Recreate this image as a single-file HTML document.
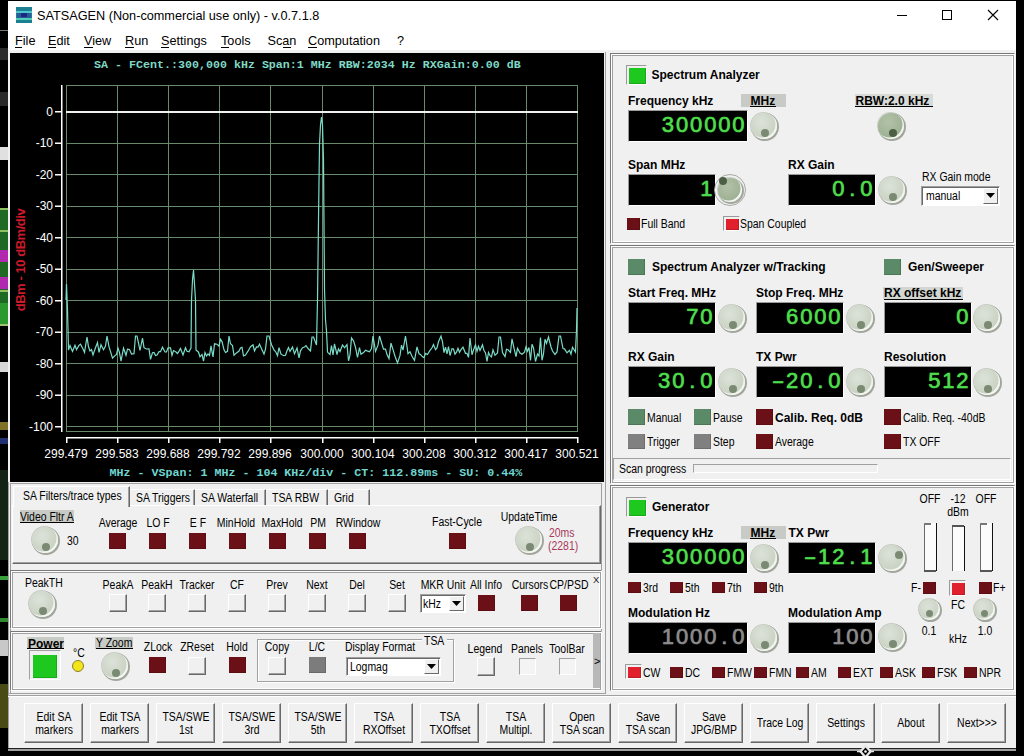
<!DOCTYPE html><html><head><meta charset='utf-8'><style>
*{margin:0;padding:0;box-sizing:border-box}
html,body{width:1024px;height:756px;overflow:hidden;background:#000;position:relative;font-family:"Liberation Sans",sans-serif}
.a{position:absolute}
.t{position:absolute;white-space:pre;line-height:1}
.b{font-weight:bold;font-size:12px;color:#000}
.r{font-size:11px;letter-spacing:-0.3px;color:#000}
.disp{position:absolute;background:#000;border-top:1px solid #a0a0a0;border-left:1px solid #a0a0a0;border-bottom:1px solid #fff;border-right:1px solid #fff}
.dg{position:absolute;right:3px;top:4px;font-family:"Liberation Mono",monospace;font-size:23px;line-height:1;color:#46d846;letter-spacing:0.3px;white-space:pre}
.knob{position:absolute;border-radius:50%;background:radial-gradient(circle at 40% 38%,#dfe3da 0%,#cdd2c6 55%,#b5bbad 100%);box-shadow:1px 1px 0 1px #fff, -1px -1px 1px #9aa094}
.dot{position:absolute;width:8px;height:8px;border-radius:50%;background:#7f8a7a}
.led{position:absolute;background:#6b1014}
.btn{position:absolute;background:#f0f0f0;border-top:1px solid #fff;border-left:1px solid #fff;border-right:1px solid #696969;border-bottom:1px solid #696969;box-shadow:inset -1px -1px 0 #a0a0a0}
.panel{position:absolute;border-top:1px solid #a0a0a0;border-left:1px solid #a0a0a0;border-right:1px solid #fff;border-bottom:1px solid #fff;box-shadow:inset 1px 1px 0 #fff, inset -1px -1px 0 #a0a0a0}
.hl{position:absolute;background:#c9cdc6}
</style></head><body>
<div class='a' style='left:0;top:30px;width:8px;height:1px;background:#777'></div>
<div class='a' style='left:0;top:48px;width:8px;height:12px;background:#2a2a2a'></div>
<div class='a' style='left:0;top:92px;width:8px;height:14px;background:#2a2a2a'></div>
<div class='a' style='left:0;top:147px;width:8px;height:13px;background:#e0e0e0'></div>
<div class='a' style='left:0;top:208px;width:8px;height:118px;background:#1e6a24'></div>
<div class='a' style='left:0;top:250px;width:8px;height:12px;background:#b02ab0'></div>
<div class='a' style='left:0;top:277px;width:8px;height:12px;background:#b02ab0'></div>
<div class='a' style='left:0;top:208px;width:8px;height:2px;background:#90c060'></div>
<div class='a' style='left:0;top:230px;width:8px;height:2px;background:#90c060'></div>
<div class='a' style='left:0;top:290px;width:8px;height:2px;background:#90c060'></div>
<div class='a' style='left:0;top:303px;width:8px;height:22px;background:#2a9a30'></div>
<div class='a' style='left:0;top:324px;width:8px;height:2px;background:#a0c070'></div>
<div class='a' style='left:0;top:362px;width:8px;height:10px;background:#d8d8d8'></div>
<div class='a' style='left:0;top:422px;width:8px;height:8px;background:#807028'></div>
<div class='a' style='left:0;top:438px;width:8px;height:6px;background:#203070'></div>
<div class='a' style='left:0;top:470px;width:8px;height:90px;background:#142414'></div>
<div class='a' style='left:0;top:576px;width:8px;height:4px;background:#38a038'></div>
<div class='a' style='left:0;top:618px;width:8px;height:4px;background:#308830'></div>
<div class='a' style='left:0;top:640px;width:8px;height:16px;background:#c8c8c8'></div>
<div class='a' style='left:0;top:684px;width:8px;height:44px;background:#4a4a14'></div>
<div class='a' style='left:8px;top:1px;width:1008px;height:748px;background:#f0f0f0'></div>
<div class='a' style='left:8px;top:1px;width:1008px;height:49px;background:#fff'></div>
<div class='a' style='left:16px;top:7px;width:16px;height:16px;background:#1d7f92'><div class='a' style='left:0;top:4px;width:16px;height:1.5px;background:#50c8d0'></div><div class='a' style='left:0;top:11px;width:16px;height:1.5px;background:#50d0b8'></div><div class='a' style='left:1px;top:6px;width:14px;height:5px;background:#2a5a9a'></div><div class='a' style='left:5px;top:6px;width:6px;height:4px;background:#1a2a80'></div></div>
<div class='t' style='left:37px;top:10px;font-size:12.7px;color:#000'>SATSAGEN (Non-commercial use only) - v.0.7.1.8</div>
<div class='a' style='left:897px;top:15px;width:10px;height:1px;background:#000'></div>
<div class='a' style='left:942px;top:10px;width:10px;height:10px;border:1px solid #000'></div>
<svg class='a' style='left:987px;top:9px' width='12' height='12'><path d='M1 1L11 11M11 1L1 11' stroke='#000' stroke-width='1.1'/></svg>
<div class='t' style='left:15px;top:34.5px;font-size:12.7px;color:#000'>File</div>
<div class='t' style='left:48px;top:34.5px;font-size:12.7px;color:#000'>Edit</div>
<div class='t' style='left:84px;top:34.5px;font-size:12.7px;color:#000'>View</div>
<div class='t' style='left:125px;top:34.5px;font-size:12.7px;color:#000'>Run</div>
<div class='t' style='left:161px;top:34.5px;font-size:12.7px;color:#000'>Settings</div>
<div class='t' style='left:221px;top:34.5px;font-size:12.7px;color:#000'>Tools</div>
<div class='t' style='left:267.5px;top:34.5px;font-size:12.7px;color:#000'>Scan</div>
<div class='t' style='left:308px;top:34.5px;font-size:12.7px;color:#000'>Computation</div>
<div class='t' style='left:397px;top:34.5px;font-size:12.7px;color:#000'>?</div>
<div class='a' style='left:15px;top:46.5px;width:7px;height:1px;background:#000'></div>
<div class='a' style='left:48px;top:46.5px;width:8px;height:1px;background:#000'></div>
<div class='a' style='left:84px;top:46.5px;width:9px;height:1px;background:#000'></div>
<div class='a' style='left:125px;top:46.5px;width:9px;height:1px;background:#000'></div>
<div class='a' style='left:161px;top:46.5px;width:8px;height:1px;background:#000'></div>
<div class='a' style='left:221px;top:46.5px;width:8px;height:1px;background:#000'></div>
<div class='a' style='left:283px;top:46.5px;width:8px;height:1px;background:#000'></div>
<div class='a' style='left:308px;top:46.5px;width:9px;height:1px;background:#000'></div>
<div class='a' style='left:10px;top:53px;width:594px;height:429px;background:#000'></div>
<svg class='a' style='left:0;top:0' width='1024' height='756' viewBox='0 0 1024 756'><rect x='66' y='85' width='1' height='347' fill='#678a6a'/><rect x='117' y='85' width='1' height='347' fill='#678a6a'/><rect x='168' y='85' width='1' height='347' fill='#678a6a'/><rect x='219' y='85' width='1' height='347' fill='#678a6a'/><rect x='270' y='85' width='1' height='347' fill='#678a6a'/><rect x='322' y='85' width='1' height='347' fill='#678a6a'/><rect x='373' y='85' width='1' height='347' fill='#678a6a'/><rect x='424' y='85' width='1' height='347' fill='#678a6a'/><rect x='475' y='85' width='1' height='347' fill='#678a6a'/><rect x='526' y='85' width='1' height='347' fill='#678a6a'/><rect x='577' y='85' width='1' height='347' fill='#678a6a'/><rect x='66' y='85' width='512' height='1' fill='#678a6a'/><rect x='66' y='143' width='512' height='1' fill='#678a6a'/><rect x='66' y='174' width='512' height='1' fill='#678a6a'/><rect x='66' y='206' width='512' height='1' fill='#678a6a'/><rect x='66' y='237' width='512' height='1' fill='#678a6a'/><rect x='66' y='269' width='512' height='1' fill='#678a6a'/><rect x='66' y='300' width='512' height='1' fill='#678a6a'/><rect x='66' y='332' width='512' height='1' fill='#678a6a'/><rect x='66' y='363' width='512' height='1' fill='#678a6a'/><rect x='66' y='395' width='512' height='1' fill='#678a6a'/><rect x='66' y='426' width='512' height='1' fill='#678a6a'/><rect x='66' y='431' width='512' height='1' fill='#678a6a'/><rect x='66' y='111' width='512' height='2' fill='#f0f0f0'/><rect x='61' y='85' width='1.5' height='347' fill='#fff'/><rect x='66' y='437' width='512' height='1.5' fill='#fff'/><rect x='66' y='437' width='1.5' height='6' fill='#fff'/><rect x='117' y='437' width='1.5' height='6' fill='#fff'/><rect x='168' y='437' width='1.5' height='6' fill='#fff'/><rect x='219' y='437' width='1.5' height='6' fill='#fff'/><rect x='270' y='437' width='1.5' height='6' fill='#fff'/><rect x='322' y='437' width='1.5' height='6' fill='#fff'/><rect x='373' y='437' width='1.5' height='6' fill='#fff'/><rect x='424' y='437' width='1.5' height='6' fill='#fff'/><rect x='475' y='437' width='1.5' height='6' fill='#fff'/><rect x='526' y='437' width='1.5' height='6' fill='#fff'/><rect x='577' y='437' width='1.5' height='6' fill='#fff'/><rect x='55' y='111.0' width='6' height='1.5' fill='#fff'/><rect x='55' y='142.5' width='6' height='1.5' fill='#fff'/><rect x='55' y='174.0' width='6' height='1.5' fill='#fff'/><rect x='55' y='205.5' width='6' height='1.5' fill='#fff'/><rect x='55' y='237.0' width='6' height='1.5' fill='#fff'/><rect x='55' y='268.5' width='6' height='1.5' fill='#fff'/><rect x='55' y='300.0' width='6' height='1.5' fill='#fff'/><rect x='55' y='331.5' width='6' height='1.5' fill='#fff'/><rect x='55' y='363.0' width='6' height='1.5' fill='#fff'/><rect x='55' y='394.5' width='6' height='1.5' fill='#fff'/><rect x='55' y='426.0' width='6' height='1.5' fill='#fff'/><path d='M66.0 300.0 L66.5 284.0 L67.5 310.0 L68.5 350.0 L70.0 345.4 L72.5 351.5 L75.0 345.3 L76.5 349.6 L79.0 345.4 L80.5 344.2 L83.0 349.0 L84.5 352.4 L87.0 337.0 L88.5 346.8 L90.0 350.9 L91.5 349.6 L93.0 355.0 L95.5 347.7 L97.5 342.5 L99.0 352.4 L101.0 344.8 L103.5 349.8 L105.5 346.1 L107.0 336.0 L109.0 346.7 L111.0 353.1 L112.5 358.2 L115.0 355.6 L116.5 354.4 L118.0 348.1 L119.5 352.7 L121.0 361.1 L123.5 348.1 L126.0 355.3 L127.5 349.2 L129.5 349.5 L131.5 354.1 L134.0 353.7 L135.5 336.0 L137.0 336.0 L138.5 343.0 L140.0 350.5 L142.5 338.1 L144.0 347.7 L146.5 349.0 L149.0 348.9 L150.5 359.4 L152.5 352.7 L154.0 352.4 L155.5 355.6 L157.0 355.0 L159.0 351.6 L160.5 351.7 L162.5 347.2 L165.0 352.0 L166.5 352.0 L168.0 347.8 L170.5 347.8 L172.0 355.3 L173.5 350.6 L176.0 352.0 L177.5 353.5 L179.0 351.1 L180.5 348.5 L183.0 354.9 L185.5 347.7 L187.0 351.3 L189.0 351.8 L191.0 348.0 L191.5 300.0 L192.5 280.0 L193.5 270.0 L194.5 284.0 L195.5 300.0 L196.0 350.0 L198.5 352.2 L200.0 356.8 L202.0 354.5 L203.5 361.2 L205.0 352.5 L206.5 356.0 L208.0 353.9 L209.5 355.4 L211.0 345.9 L213.0 357.0 L214.5 343.8 L217.0 344.2 L219.0 346.2 L220.5 339.3 L222.0 341.6 L224.0 349.9 L225.5 352.5 L227.5 351.3 L229.0 336.0 L230.5 343.8 L232.5 345.6 L234.0 355.3 L236.5 352.9 L239.0 351.0 L240.5 347.9 L242.0 347.3 L243.5 355.8 L245.5 355.0 L248.0 351.2 L250.5 346.7 L253.0 344.8 L254.5 351.0 L256.5 347.0 L258.0 347.2 L259.5 344.2 L262.0 349.7 L264.0 354.1 L265.5 349.1 L267.0 336.0 L269.0 336.0 L271.5 344.7 L274.0 349.8 L276.0 352.2 L277.5 355.7 L279.0 347.6 L281.0 354.2 L282.5 355.0 L284.0 355.7 L285.5 355.3 L287.0 350.8 L288.5 347.6 L290.0 351.4 L292.5 347.1 L294.5 353.8 L297.0 348.0 L299.0 357.9 L300.5 350.8 L302.5 347.7 L304.5 347.0 L306.0 345.6 L308.5 349.0 L310.5 350.9 L312.0 337.0 L313.5 337.0 L316.5 345.0 L317.5 300.0 L318.5 220.0 L319.5 144.0 L320.5 125.0 L321.5 117.0 L322.5 125.0 L323.5 160.0 L324.5 289.0 L325.5 320.0 L326.5 331.0 L327.5 352.0 L328.0 352.6 L330.0 354.5 L331.5 345.6 L333.0 354.8 L334.5 343.9 L337.0 354.5 L338.5 348.9 L340.0 351.5 L342.5 345.0 L344.5 347.8 L347.0 344.6 L348.5 360.8 L350.0 355.1 L351.5 338.0 L353.5 340.8 L355.5 347.2 L357.5 357.5 L359.5 347.7 L361.0 354.3 L363.5 352.6 L365.5 350.3 L367.0 350.9 L369.5 351.8 L371.5 348.6 L373.0 336.0 L375.5 351.4 L378.0 345.2 L379.5 336.0 L382.0 344.4 L383.5 349.1 L385.5 349.0 L387.0 354.6 L389.0 358.6 L391.0 343.2 L393.5 351.1 L395.0 356.2 L397.5 363.0 L400.0 355.4 L401.5 345.2 L403.0 350.2 L405.5 336.0 L408.0 353.7 L410.0 351.7 L412.0 356.3 L414.5 360.4 L417.0 346.9 L419.0 353.7 L420.5 354.4 L422.5 356.9 L424.0 357.7 L425.5 353.4 L427.5 354.5 L429.5 351.1 L432.0 347.8 L433.5 344.5 L435.5 349.7 L437.0 348.0 L438.5 341.8 L441.0 336.0 L442.5 341.9 L444.0 352.7 L445.5 347.2 L447.0 353.8 L448.5 346.7 L450.0 355.5 L452.0 348.7 L453.5 349.0 L455.0 354.1 L456.5 352.1 L458.0 348.4 L459.5 352.3 L461.0 349.7 L463.0 347.2 L465.5 353.3 L467.0 353.3 L468.5 357.4 L470.0 338.0 L472.0 354.7 L473.5 350.0 L475.5 344.8 L477.0 351.4 L478.5 346.3 L480.0 350.5 L482.5 344.9 L484.0 350.6 L485.5 352.9 L487.0 361.4 L488.5 352.5 L490.0 355.7 L491.5 356.9 L493.0 349.9 L495.0 355.2 L497.5 352.9 L499.0 337.0 L500.5 337.0 L502.5 352.6 L505.0 356.6 L506.5 349.3 L508.0 349.8 L510.5 352.4 L512.0 338.8 L514.0 348.2 L516.0 356.6 L517.5 348.3 L520.0 353.1 L522.0 354.3 L524.5 352.1 L526.0 346.8 L527.5 351.2 L529.0 347.5 L530.5 360.5 L532.0 344.2 L533.5 348.0 L535.5 361.5 L537.5 354.1 L539.0 356.0 L540.5 337.6 L542.0 360.3 L543.5 353.8 L545.0 339.3 L546.5 343.3 L548.5 337.0 L551.0 347.0 L552.5 351.0 L555.0 354.4 L557.0 351.9 L559.0 336.0 L560.5 336.0 L563.0 348.6 L564.5 348.9 L567.0 352.9 L569.5 350.3 L571.0 354.2 L572.5 347.3 L575.5 352.0 L576.5 330.0 L577.0 308.0' fill='none' stroke='#7adcc8' stroke-width='1.2'/></svg>
<div class='t' style='right:971px;top:105.5px;font-size:12px;color:#fff'>0</div>
<div class='t' style='right:971px;top:137px;font-size:12px;color:#fff'>-10</div>
<div class='t' style='right:971px;top:168.5px;font-size:12px;color:#fff'>-20</div>
<div class='t' style='right:971px;top:200px;font-size:12px;color:#fff'>-30</div>
<div class='t' style='right:971px;top:231.5px;font-size:12px;color:#fff'>-40</div>
<div class='t' style='right:971px;top:263px;font-size:12px;color:#fff'>-50</div>
<div class='t' style='right:971px;top:294.5px;font-size:12px;color:#fff'>-60</div>
<div class='t' style='right:971px;top:326px;font-size:12px;color:#fff'>-70</div>
<div class='t' style='right:971px;top:357.5px;font-size:12px;color:#fff'>-80</div>
<div class='t' style='right:971px;top:389px;font-size:12px;color:#fff'>-90</div>
<div class='t' style='right:971px;top:420.5px;font-size:12px;color:#fff'>-100</div>
<div class='t' style='left:44px;top:448px;width:44px;text-align:center;font-size:12px;color:#fff'>299.479</div>
<div class='t' style='left:95px;top:448px;width:44px;text-align:center;font-size:12px;color:#fff'>299.583</div>
<div class='t' style='left:146px;top:448px;width:44px;text-align:center;font-size:12px;color:#fff'>299.688</div>
<div class='t' style='left:197px;top:448px;width:44px;text-align:center;font-size:12px;color:#fff'>299.792</div>
<div class='t' style='left:248px;top:448px;width:44px;text-align:center;font-size:12px;color:#fff'>299.896</div>
<div class='t' style='left:300px;top:448px;width:44px;text-align:center;font-size:12px;color:#fff'>300.000</div>
<div class='t' style='left:351px;top:448px;width:44px;text-align:center;font-size:12px;color:#fff'>300.104</div>
<div class='t' style='left:402px;top:448px;width:44px;text-align:center;font-size:12px;color:#fff'>300.208</div>
<div class='t' style='left:453px;top:448px;width:44px;text-align:center;font-size:12px;color:#fff'>300.312</div>
<div class='t' style='left:504px;top:448px;width:44px;text-align:center;font-size:12px;color:#fff'>300.417</div>
<div class='t' style='left:555px;top:448px;width:44px;text-align:center;font-size:12px;color:#fff'>300.521</div>
<div class='t' style='left:94px;top:60px;font-family:"Liberation Mono",monospace;font-size:11.67px;font-weight:bold;color:#7fd8c6'>SA - FCent.:300,000 kHz Span:1 MHz RBW:2034 Hz RXGain:0.00 dB</div>
<div class='t' style='left:109.5px;top:467.5px;font-family:"Liberation Mono",monospace;font-size:11.67px;font-weight:bold;color:#6fd6d0'>MHz - VSpan: 1 MHz - 104 KHz/div - CT: 112.89ms - SU: 0.44%</div>
<div class='t' style='left:19.5px;top:260px;transform:translate(-50%,-50%) rotate(-90deg);font-size:13px;letter-spacing:-0.45px;font-weight:bold;color:#cc1a2a'>dBm - 10 dBm/div</div>
<div class='a' style='left:605px;top:52px;width:1px;height:642px;background:#a0a0a0'></div>
<div class='a' style='left:1016px;top:0;width:8px;height:756px;background:#000'></div>
<div class='a' style='left:610px;top:53px;width:405px;height:191px;border-top:1px solid #787878;border-left:1px solid #787878;border-right:1px solid #fff;border-bottom:1px solid #fff;box-shadow:inset 1px 1px 0 #fff,inset 2px 2px 0 #a0a0a0,inset -1px -1px 0 #a0a0a0,inset -2px -2px 0 #fff'></div>
<div class='a' style='left:626px;top:65px;width:21px;height:20px;border-top:1px solid #9a9a9a;border-left:1px solid #9a9a9a;border-right:1px solid #fff;border-bottom:1px solid #fff'></div>
<div class='a' style='left:629px;top:68px;width:17px;height:16px;background:#1ec81e;box-shadow:inset -1px -1px 0 rgba(0,0,0,0.15)'></div>
<div class='t' style='top:68.90px;font-size:12px;color:#000;font-weight:bold;left:651.5px;'>Spectrum Analyzer</div>
<div class='t' style='top:94.90px;font-size:12px;color:#000;font-weight:bold;left:628px;'>Frequency kHz</div>
<div class='a' style='left:741px;top:94px;width:45px;height:13px;background:#c8cbc5'></div>
<div class='t' style='top:94.90px;font-size:12px;color:#000;font-weight:bold;left:750.5px;'>MHz</div>
<div class='a' style='left:750px;top:106px;width:26px;height:1px;background:#000'></div>
<div class='a' style='left:855px;top:94px;width:78px;height:13px;background:#d8dad6'></div>
<div class='t' style='top:94.90px;font-size:12px;color:#000;font-weight:bold;left:855.5px;'>RBW:2.0 kHz</div>
<div class='a' style='left:855px;top:106px;width:78px;height:1px;background:#000'></div>
<div class='a' style='left:628px;top:110px;width:120px;height:32px;background:#000;border-top:1px solid #9a9a9a;border-left:1px solid #9a9a9a;border-right:1px solid #fff;border-bottom:1px solid #fff'></div>
<div class='t' style='left:628px;top:114px;width:117.5px;text-align:right;font-size:22px;color:#4cdc4c;-webkit-text-stroke:0.4px #4cdc4c;text-shadow:0 0 1px #4cdc4c'><span style='display:inline-block;width:14.1px;text-align:center'>3</span><span style='display:inline-block;width:14.1px;text-align:center'>0</span><span style='display:inline-block;width:14.1px;text-align:center'>0</span><span style='display:inline-block;width:14.1px;text-align:center'>0</span><span style='display:inline-block;width:14.1px;text-align:center'>0</span><span style='display:inline-block;width:14.1px;text-align:center'>0</span></div>
<div class='a' style='left:750.5px;top:113px;width:26px;height:26px;border-radius:50%;background:radial-gradient(circle at 40% 35%,#dce2d8 0%,#cdd5c7 55%,#bfc8b9 100%);box-shadow:inset -1.5px -1.5px 0 #f4f6f2,1px 1px 0 1px #a2a79e,-0.5px -0.5px 0 0.5px #c8ccc4'></div>
<div class='a' style='left:760.5px;top:128.5px;width:8px;height:8px;border-radius:50%;background:#7b8a73'></div>
<div class='a' style='left:878.3px;top:113px;width:26px;height:26px;border-radius:50%;background:radial-gradient(circle at 40% 35%,#b2c2a8 0%,#a2b497 55%,#93a688 100%);box-shadow:inset -1.5px -1.5px 0 #f4f6f2,1px 1px 0 1px #a2a79e,-0.5px -0.5px 0 0.5px #c8ccc4'></div>
<div class='a' style='left:888.9px;top:128.6px;width:8px;height:8px;border-radius:50%;background:#4d6046'></div>
<div class='t' style='top:159.40px;font-size:12px;color:#000;font-weight:bold;left:628px;'>Span MHz</div>
<div class='a' style='left:628px;top:174px;width:88px;height:32px;background:#000;border-top:1px solid #9a9a9a;border-left:1px solid #9a9a9a;border-right:1px solid #fff;border-bottom:1px solid #fff'></div>
<div class='t' style='left:628px;top:178px;width:85.5px;text-align:right;font-size:22px;color:#4cdc4c;-webkit-text-stroke:0.4px #4cdc4c;text-shadow:0 0 1px #4cdc4c'><span style='display:inline-block;width:14.1px;text-align:center'>1</span></div>
<div class='a' style='left:714px;top:174px;width:32px;height:32px;border-radius:50%;border:1.5px solid #a8aca4'></div>
<div class='a' style='left:718px;top:178px;width:24px;height:24px;border-radius:50%;background:radial-gradient(circle at 40% 35%,#b2c2a8 0%,#a2b497 55%,#93a688 100%);box-shadow:inset -1.5px -1.5px 0 #f4f6f2,1px 1px 0 1px #a2a79e,-0.5px -0.5px 0 0.5px #c8ccc4'></div>
<div class='a' style='left:719px;top:176.5px;width:8px;height:8px;border-radius:50%;background:#4d6046'></div>
<div class='t' style='top:159.40px;font-size:12px;color:#000;font-weight:bold;left:788px;'>RX Gain</div>
<div class='a' style='left:788px;top:174px;width:88px;height:32px;background:#000;border-top:1px solid #9a9a9a;border-left:1px solid #9a9a9a;border-right:1px solid #fff;border-bottom:1px solid #fff'></div>
<div class='t' style='left:788px;top:178px;width:85.5px;text-align:right;font-size:22px;color:#4cdc4c;-webkit-text-stroke:0.4px #4cdc4c;text-shadow:0 0 1px #4cdc4c'><span style='display:inline-block;width:14.1px;text-align:center'>0</span><span style='display:inline-block;width:14.1px;text-align:center'>.</span><span style='display:inline-block;width:14.1px;text-align:center'>0</span></div>
<div class='a' style='left:878.5px;top:177px;width:26px;height:26px;border-radius:50%;background:radial-gradient(circle at 40% 35%,#dce2d8 0%,#cdd5c7 55%,#bfc8b9 100%);box-shadow:inset -1.5px -1.5px 0 #f4f6f2,1px 1px 0 1px #a2a79e,-0.5px -0.5px 0 0.5px #c8ccc4'></div>
<div class='a' style='left:888.5px;top:192.5px;width:8px;height:8px;border-radius:50%;background:#7b8a73'></div>
<div class='t' style='top:170.90px;font-size:12px;color:#000;left:921.5px;transform:scaleX(0.87);transform-origin:0 0;'>RX Gain mode</div>
<div class='a' style='left:921px;top:186px;width:79px;height:20px;background:#fff;border-top:1px solid #a0a0a0;border-left:1px solid #a0a0a0;border-right:1px solid #fff;border-bottom:1px solid #fff;box-shadow:inset 1px 1px 0 #696969'></div>
<div class='a' style='left:983px;top:188px;width:15px;height:16px;background:#f0f0f0;border-top:1px solid #fff;border-left:1px solid #fff;border-right:1px solid #696969;border-bottom:1px solid #696969'></div>
<svg class='a' style='left:986px;top:193px' width='9' height='5'><path d='M0 0H9L4.5 5Z' fill='#000'/></svg>
<div class='t' style='top:190.40px;font-size:12px;color:#000;left:926px;transform:scaleX(0.87);transform-origin:0 0;'>manual</div>
<div class='a' style='left:627px;top:218px;width:13px;height:12px;background:#6a1016;box-shadow:inset -1px -1px 0 rgba(0,0,0,0.15)'></div>
<div class='t' style='top:218.40px;font-size:12px;color:#000;left:641px;transform:scaleX(0.87);transform-origin:0 0;'>Full Band</div>
<div class='a' style='left:723px;top:216px;width:17px;height:15px;border-top:1px solid #9a9a9a;border-left:1px solid #9a9a9a;border-right:1px solid #fff;border-bottom:1px solid #fff'></div>
<div class='a' style='left:726px;top:219px;width:13px;height:11px;background:#e0202c;box-shadow:inset -1px -1px 0 rgba(0,0,0,0.15)'></div>
<div class='t' style='top:218.40px;font-size:12px;color:#000;left:739.5px;transform:scaleX(0.87);transform-origin:0 0;'>Span Coupled</div>
<div class='a' style='left:610px;top:245px;width:405px;height:239px;border-top:1px solid #787878;border-left:1px solid #787878;border-right:1px solid #fff;border-bottom:1px solid #fff;box-shadow:inset 1px 1px 0 #fff,inset 2px 2px 0 #a0a0a0,inset -1px -1px 0 #a0a0a0,inset -2px -2px 0 #fff'></div>
<div class='a' style='left:628px;top:259px;width:17px;height:16px;background:#5a8a68;box-shadow:inset -1px -1px 0 rgba(0,0,0,0.15)'></div>
<div class='t' style='top:261.40px;font-size:12px;color:#000;font-weight:bold;left:652px;'>Spectrum Analyzer w/Tracking</div>
<div class='a' style='left:884px;top:259px;width:17px;height:16px;background:#5a8a68;box-shadow:inset -1px -1px 0 rgba(0,0,0,0.15)'></div>
<div class='t' style='top:261.40px;font-size:12px;color:#000;font-weight:bold;left:908px;'>Gen/Sweeper</div>
<div class='t' style='top:287.40px;font-size:12px;color:#000;font-weight:bold;left:628px;'>Start Freq. MHz</div>
<div class='a' style='left:628px;top:302px;width:88px;height:32px;background:#000;border-top:1px solid #9a9a9a;border-left:1px solid #9a9a9a;border-right:1px solid #fff;border-bottom:1px solid #fff'></div>
<div class='t' style='left:628px;top:306px;width:85.5px;text-align:right;font-size:22px;color:#4cdc4c;-webkit-text-stroke:0.4px #4cdc4c;text-shadow:0 0 1px #4cdc4c'><span style='display:inline-block;width:14.1px;text-align:center'>7</span><span style='display:inline-block;width:14.1px;text-align:center'>0</span></div>
<div class='a' style='left:718.5px;top:305px;width:26px;height:26px;border-radius:50%;background:radial-gradient(circle at 40% 35%,#dce2d8 0%,#cdd5c7 55%,#bfc8b9 100%);box-shadow:inset -1.5px -1.5px 0 #f4f6f2,1px 1px 0 1px #a2a79e,-0.5px -0.5px 0 0.5px #c8ccc4'></div>
<div class='a' style='left:728.5px;top:320.5px;width:8px;height:8px;border-radius:50%;background:#7b8a73'></div>
<div class='t' style='top:287.40px;font-size:12px;color:#000;font-weight:bold;left:756px;'>Stop Freq. MHz</div>
<div class='a' style='left:756px;top:302px;width:88px;height:32px;background:#000;border-top:1px solid #9a9a9a;border-left:1px solid #9a9a9a;border-right:1px solid #fff;border-bottom:1px solid #fff'></div>
<div class='t' style='left:756px;top:306px;width:85.5px;text-align:right;font-size:22px;color:#4cdc4c;-webkit-text-stroke:0.4px #4cdc4c;text-shadow:0 0 1px #4cdc4c'><span style='display:inline-block;width:14.1px;text-align:center'>6</span><span style='display:inline-block;width:14.1px;text-align:center'>0</span><span style='display:inline-block;width:14.1px;text-align:center'>0</span><span style='display:inline-block;width:14.1px;text-align:center'>0</span></div>
<div class='a' style='left:846.5px;top:305px;width:26px;height:26px;border-radius:50%;background:radial-gradient(circle at 40% 35%,#dce2d8 0%,#cdd5c7 55%,#bfc8b9 100%);box-shadow:inset -1.5px -1.5px 0 #f4f6f2,1px 1px 0 1px #a2a79e,-0.5px -0.5px 0 0.5px #c8ccc4'></div>
<div class='a' style='left:856.5px;top:320.5px;width:8px;height:8px;border-radius:50%;background:#7b8a73'></div>
<div class='a' style='left:883px;top:287px;width:80px;height:12px;background:#d3d6d0'></div>
<div class='t' style='top:287.40px;font-size:12px;color:#000;font-weight:bold;left:884px;'>RX offset kHz</div>
<div class='a' style='left:884px;top:299px;width:79px;height:1px;background:#000'></div>
<div class='a' style='left:884px;top:302px;width:88px;height:32px;background:#000;border-top:1px solid #9a9a9a;border-left:1px solid #9a9a9a;border-right:1px solid #fff;border-bottom:1px solid #fff'></div>
<div class='t' style='left:884px;top:306px;width:85.5px;text-align:right;font-size:22px;color:#4cdc4c;-webkit-text-stroke:0.4px #4cdc4c;text-shadow:0 0 1px #4cdc4c'><span style='display:inline-block;width:14.1px;text-align:center'>0</span></div>
<div class='a' style='left:974px;top:305px;width:26px;height:26px;border-radius:50%;background:radial-gradient(circle at 40% 35%,#dce2d8 0%,#cdd5c7 55%,#bfc8b9 100%);box-shadow:inset -1.5px -1.5px 0 #f4f6f2,1px 1px 0 1px #a2a79e,-0.5px -0.5px 0 0.5px #c8ccc4'></div>
<div class='a' style='left:984px;top:320.5px;width:8px;height:8px;border-radius:50%;background:#7b8a73'></div>
<div class='t' style='top:351.40px;font-size:12px;color:#000;font-weight:bold;left:628px;'>RX Gain</div>
<div class='a' style='left:628px;top:366px;width:88px;height:32px;background:#000;border-top:1px solid #9a9a9a;border-left:1px solid #9a9a9a;border-right:1px solid #fff;border-bottom:1px solid #fff'></div>
<div class='t' style='left:628px;top:370px;width:85.5px;text-align:right;font-size:22px;color:#4cdc4c;-webkit-text-stroke:0.4px #4cdc4c;text-shadow:0 0 1px #4cdc4c'><span style='display:inline-block;width:14.1px;text-align:center'>3</span><span style='display:inline-block;width:14.1px;text-align:center'>0</span><span style='display:inline-block;width:14.1px;text-align:center'>.</span><span style='display:inline-block;width:14.1px;text-align:center'>0</span></div>
<div class='a' style='left:718.5px;top:369px;width:26px;height:26px;border-radius:50%;background:radial-gradient(circle at 40% 35%,#dce2d8 0%,#cdd5c7 55%,#bfc8b9 100%);box-shadow:inset -1.5px -1.5px 0 #f4f6f2,1px 1px 0 1px #a2a79e,-0.5px -0.5px 0 0.5px #c8ccc4'></div>
<div class='a' style='left:728.5px;top:384.5px;width:8px;height:8px;border-radius:50%;background:#7b8a73'></div>
<div class='t' style='top:351.40px;font-size:12px;color:#000;font-weight:bold;left:756px;'>TX Pwr</div>
<div class='a' style='left:756px;top:366px;width:88px;height:32px;background:#000;border-top:1px solid #9a9a9a;border-left:1px solid #9a9a9a;border-right:1px solid #fff;border-bottom:1px solid #fff'></div>
<div class='t' style='left:756px;top:370px;width:85.5px;text-align:right;font-size:22px;color:#4cdc4c;-webkit-text-stroke:0.4px #4cdc4c;text-shadow:0 0 1px #4cdc4c'><span style='display:inline-block;width:14.1px;text-align:center;transform:scaleX(0.8)'>&#8211;</span><span style='display:inline-block;width:14.1px;text-align:center'>2</span><span style='display:inline-block;width:14.1px;text-align:center'>0</span><span style='display:inline-block;width:14.1px;text-align:center'>.</span><span style='display:inline-block;width:14.1px;text-align:center'>0</span></div>
<div class='a' style='left:846.5px;top:369px;width:26px;height:26px;border-radius:50%;background:radial-gradient(circle at 40% 35%,#dce2d8 0%,#cdd5c7 55%,#bfc8b9 100%);box-shadow:inset -1.5px -1.5px 0 #f4f6f2,1px 1px 0 1px #a2a79e,-0.5px -0.5px 0 0.5px #c8ccc4'></div>
<div class='a' style='left:856.5px;top:384.5px;width:8px;height:8px;border-radius:50%;background:#7b8a73'></div>
<div class='t' style='top:351.40px;font-size:12px;color:#000;font-weight:bold;left:884px;'>Resolution</div>
<div class='a' style='left:884px;top:366px;width:88px;height:32px;background:#000;border-top:1px solid #9a9a9a;border-left:1px solid #9a9a9a;border-right:1px solid #fff;border-bottom:1px solid #fff'></div>
<div class='t' style='left:884px;top:370px;width:85.5px;text-align:right;font-size:22px;color:#4cdc4c;-webkit-text-stroke:0.4px #4cdc4c;text-shadow:0 0 1px #4cdc4c'><span style='display:inline-block;width:14.1px;text-align:center'>5</span><span style='display:inline-block;width:14.1px;text-align:center'>1</span><span style='display:inline-block;width:14.1px;text-align:center'>2</span></div>
<div class='a' style='left:974px;top:369px;width:26px;height:26px;border-radius:50%;background:radial-gradient(circle at 40% 35%,#dce2d8 0%,#cdd5c7 55%,#bfc8b9 100%);box-shadow:inset -1.5px -1.5px 0 #f4f6f2,1px 1px 0 1px #a2a79e,-0.5px -0.5px 0 0.5px #c8ccc4'></div>
<div class='a' style='left:984px;top:384.5px;width:8px;height:8px;border-radius:50%;background:#7b8a73'></div>
<div class='a' style='left:628px;top:409px;width:17px;height:16px;background:#5a8a68;box-shadow:inset -1px -1px 0 rgba(0,0,0,0.15)'></div>
<div class='t' style='top:411.90px;font-size:12px;color:#000;left:647px;transform:scaleX(0.87);transform-origin:0 0;'>Manual</div>
<div class='a' style='left:694px;top:409px;width:17px;height:16px;background:#5a8a68;box-shadow:inset -1px -1px 0 rgba(0,0,0,0.15)'></div>
<div class='t' style='top:411.90px;font-size:12px;color:#000;left:713px;transform:scaleX(0.87);transform-origin:0 0;'>Pause</div>
<div class='a' style='left:756px;top:409px;width:17px;height:16px;background:#6a1016;box-shadow:inset -1px -1px 0 rgba(0,0,0,0.15)'></div>
<div class='t' style='top:411.90px;font-size:12px;color:#000;font-weight:bold;left:775px;'>Calib. Req. 0dB</div>
<div class='a' style='left:884px;top:409px;width:17px;height:16px;background:#6a1016;box-shadow:inset -1px -1px 0 rgba(0,0,0,0.15)'></div>
<div class='t' style='top:411.90px;font-size:12px;color:#000;left:903px;transform:scaleX(0.87);transform-origin:0 0;'>Calib. Req. -40dB</div>
<div class='a' style='left:628px;top:434px;width:17px;height:15px;background:#808080;box-shadow:inset -1px -1px 0 rgba(0,0,0,0.15)'></div>
<div class='t' style='top:436.40px;font-size:12px;color:#000;left:647px;transform:scaleX(0.87);transform-origin:0 0;'>Trigger</div>
<div class='a' style='left:694px;top:434px;width:17px;height:15px;background:#808080;box-shadow:inset -1px -1px 0 rgba(0,0,0,0.15)'></div>
<div class='t' style='top:436.40px;font-size:12px;color:#000;left:713px;transform:scaleX(0.87);transform-origin:0 0;'>Step</div>
<div class='a' style='left:756px;top:434px;width:17px;height:15px;background:#6a1016;box-shadow:inset -1px -1px 0 rgba(0,0,0,0.15)'></div>
<div class='t' style='top:436.40px;font-size:12px;color:#000;left:775px;transform:scaleX(0.87);transform-origin:0 0;'>Average</div>
<div class='a' style='left:884px;top:434px;width:17px;height:15px;background:#6a1016;box-shadow:inset -1px -1px 0 rgba(0,0,0,0.15)'></div>
<div class='t' style='top:436.40px;font-size:12px;color:#000;left:903px;transform:scaleX(0.87);transform-origin:0 0;'>TX OFF</div>
<div class='a' style='left:613px;top:458px;width:398px;height:22px;border-top:1px solid #a0a0a0;border-left:1px solid #a0a0a0;border-right:1px solid #fff;border-bottom:1px solid #fff'></div>
<div class='t' style='top:462.90px;font-size:12px;color:#000;left:619px;transform:scaleX(0.87);transform-origin:0 0;'>Scan progress</div>
<div class='a' style='left:693px;top:464px;width:185px;height:9px;border-top:1px solid #a0a0a0;border-left:1px solid #a0a0a0;border-right:1px solid #fff;border-bottom:1px solid #fff'></div>
<div class='a' style='left:610px;top:485px;width:405px;height:206px;border-top:1px solid #787878;border-left:1px solid #787878;border-right:1px solid #fff;border-bottom:1px solid #fff;box-shadow:inset 1px 1px 0 #fff,inset 2px 2px 0 #a0a0a0,inset -1px -1px 0 #a0a0a0,inset -2px -2px 0 #fff'></div>
<div class='a' style='left:626px;top:497px;width:21px;height:20px;border-top:1px solid #9a9a9a;border-left:1px solid #9a9a9a;border-right:1px solid #fff;border-bottom:1px solid #fff'></div>
<div class='a' style='left:629px;top:500px;width:17px;height:16px;background:#1ec81e;box-shadow:inset -1px -1px 0 rgba(0,0,0,0.15)'></div>
<div class='t' style='top:501.40px;font-size:12px;color:#000;font-weight:bold;left:652px;'>Generator</div>
<div class='t' style='top:527.40px;font-size:12px;color:#000;font-weight:bold;left:628px;'>Frequency kHz</div>
<div class='a' style='left:741px;top:526px;width:45px;height:13px;background:#c8cbc5'></div>
<div class='t' style='top:527.40px;font-size:12px;color:#000;font-weight:bold;left:750.5px;'>MHz</div>
<div class='a' style='left:750px;top:538px;width:26px;height:1px;background:#000'></div>
<div class='a' style='left:628px;top:542px;width:120px;height:32px;background:#000;border-top:1px solid #9a9a9a;border-left:1px solid #9a9a9a;border-right:1px solid #fff;border-bottom:1px solid #fff'></div>
<div class='t' style='left:628px;top:546px;width:117.5px;text-align:right;font-size:22px;color:#4cdc4c;-webkit-text-stroke:0.4px #4cdc4c;text-shadow:0 0 1px #4cdc4c'><span style='display:inline-block;width:14.1px;text-align:center'>3</span><span style='display:inline-block;width:14.1px;text-align:center'>0</span><span style='display:inline-block;width:14.1px;text-align:center'>0</span><span style='display:inline-block;width:14.1px;text-align:center'>0</span><span style='display:inline-block;width:14.1px;text-align:center'>0</span><span style='display:inline-block;width:14.1px;text-align:center'>0</span></div>
<div class='a' style='left:750.5px;top:545px;width:26px;height:26px;border-radius:50%;background:radial-gradient(circle at 40% 35%,#dce2d8 0%,#cdd5c7 55%,#bfc8b9 100%);box-shadow:inset -1.5px -1.5px 0 #f4f6f2,1px 1px 0 1px #a2a79e,-0.5px -0.5px 0 0.5px #c8ccc4'></div>
<div class='a' style='left:760.5px;top:560.5px;width:8px;height:8px;border-radius:50%;background:#7b8a73'></div>
<div class='t' style='top:527.40px;font-size:12px;color:#000;font-weight:bold;left:788.5px;'>TX Pwr</div>
<div class='a' style='left:788px;top:542px;width:88px;height:32px;background:#000;border-top:1px solid #9a9a9a;border-left:1px solid #9a9a9a;border-right:1px solid #fff;border-bottom:1px solid #fff'></div>
<div class='t' style='left:788px;top:546px;width:85.5px;text-align:right;font-size:22px;color:#4cdc4c;-webkit-text-stroke:0.4px #4cdc4c;text-shadow:0 0 1px #4cdc4c'><span style='display:inline-block;width:14.1px;text-align:center;transform:scaleX(0.8)'>&#8211;</span><span style='display:inline-block;width:14.1px;text-align:center'>1</span><span style='display:inline-block;width:14.1px;text-align:center'>2</span><span style='display:inline-block;width:14.1px;text-align:center'>.</span><span style='display:inline-block;width:14.1px;text-align:center'>1</span></div>
<div class='a' style='left:878.5px;top:544.5px;width:26px;height:26px;border-radius:50%;background:radial-gradient(circle at 40% 35%,#dce2d8 0%,#cdd5c7 55%,#bfc8b9 100%);box-shadow:inset -1.5px -1.5px 0 #f4f6f2,1px 1px 0 1px #a2a79e,-0.5px -0.5px 0 0.5px #c8ccc4'></div>
<div class='a' style='left:894.5px;top:551.0px;width:8px;height:8px;border-radius:50%;background:#7b8a73'></div>
<div class='t' style='top:492.90px;font-size:12px;color:#000;left:870.00px;width:120px;text-align:center;transform:scaleX(0.87);transform-origin:50% 0;'>OFF</div>
<div class='t' style='top:492.90px;font-size:12px;color:#000;left:897.50px;width:120px;text-align:center;transform:scaleX(0.87);transform-origin:50% 0;'>-12</div>
<div class='t' style='top:505.90px;font-size:12px;color:#000;left:897.50px;width:120px;text-align:center;transform:scaleX(0.87);transform-origin:50% 0;'>dBm</div>
<div class='t' style='top:492.90px;font-size:12px;color:#000;left:926.00px;width:120px;text-align:center;transform:scaleX(0.87);transform-origin:50% 0;'>OFF</div>
<div class='a' style='left:924px;top:523px;width:13px;height:48px;background:#fbfbfb;border-left:1.5px solid #6a6a6a;border-right:1.5px solid #111'></div>
<div class='a' style='left:924px;top:570px;width:12px;height:2px;background:#555'></div>
<div class='a' style='left:924px;top:523px;width:7px;height:1.5px;background:#777'></div>
<div class='a' style='left:952px;top:526px;width:13px;height:45px;background:#fbfbfb;border-left:1.5px solid #6a6a6a;border-right:1.5px solid #111'></div>
<div class='a' style='left:952px;top:525px;width:12px;height:2px;background:#555'></div>
<div class='a' style='left:980px;top:523px;width:13px;height:48px;background:#fbfbfb;border-left:1.5px solid #6a6a6a;border-right:1.5px solid #111'></div>
<div class='a' style='left:980px;top:570px;width:12px;height:2px;background:#555'></div>
<div class='a' style='left:980px;top:523px;width:7px;height:1.5px;background:#777'></div>
<div class='t' style='top:582.40px;font-size:12px;color:#000;left:911px;transform:scaleX(0.87);transform-origin:0 0;'>F-</div>
<div class='a' style='left:923px;top:582px;width:13px;height:12px;background:#6a1016;box-shadow:inset -1px -1px 0 rgba(0,0,0,0.15)'></div>
<div class='a' style='left:949px;top:580px;width:17px;height:16px;border-top:1px solid #9a9a9a;border-left:1px solid #9a9a9a;border-right:1px solid #fff;border-bottom:1px solid #fff'></div>
<div class='a' style='left:952px;top:583px;width:13px;height:12px;background:#e0202c;box-shadow:inset -1px -1px 0 rgba(0,0,0,0.15)'></div>
<div class='a' style='left:979px;top:582px;width:13px;height:12px;background:#6a1016;box-shadow:inset -1px -1px 0 rgba(0,0,0,0.15)'></div>
<div class='t' style='top:582.40px;font-size:12px;color:#000;left:993px;transform:scaleX(0.87);transform-origin:0 0;'>F+</div>
<div class='t' style='top:598.90px;font-size:12px;color:#000;left:897.50px;width:120px;text-align:center;transform:scaleX(0.87);transform-origin:50% 0;'>FC</div>
<div class='a' style='left:918.5px;top:598.5px;width:21.0px;height:21.0px;border-radius:50%;background:radial-gradient(circle at 40% 35%,#dce2d8 0%,#cdd5c7 55%,#bfc8b9 100%);box-shadow:inset -1.5px -1.5px 0 #f4f6f2,1px 1px 0 1px #a2a79e,-0.5px -0.5px 0 0.5px #c8ccc4'></div>
<div class='a' style='left:925.5px;top:609.5px;width:7.0px;height:7.0px;border-radius:50%;background:#7b8a73'></div>
<div class='a' style='left:974.0px;top:598.5px;width:21.0px;height:21.0px;border-radius:50%;background:radial-gradient(circle at 40% 35%,#dce2d8 0%,#cdd5c7 55%,#bfc8b9 100%);box-shadow:inset -1.5px -1.5px 0 #f4f6f2,1px 1px 0 1px #a2a79e,-0.5px -0.5px 0 0.5px #c8ccc4'></div>
<div class='a' style='left:981.0px;top:609.5px;width:7.0px;height:7.0px;border-radius:50%;background:#7b8a73'></div>
<div class='t' style='top:624.90px;font-size:12px;color:#000;left:869.00px;width:120px;text-align:center;transform:scaleX(0.87);transform-origin:50% 0;'>0.1</div>
<div class='t' style='top:632.90px;font-size:12px;color:#000;left:897.50px;width:120px;text-align:center;transform:scaleX(0.87);transform-origin:50% 0;'>kHz</div>
<div class='t' style='top:624.90px;font-size:12px;color:#000;left:925.00px;width:120px;text-align:center;transform:scaleX(0.87);transform-origin:50% 0;'>1.0</div>
<div class='a' style='left:628px;top:582px;width:13px;height:11px;background:#6a1016;box-shadow:inset -1px -1px 0 rgba(0,0,0,0.15)'></div>
<div class='t' style='top:582.40px;font-size:12px;color:#000;left:643px;transform:scaleX(0.87);transform-origin:0 0;'>3rd</div>
<div class='a' style='left:670px;top:582px;width:13px;height:11px;background:#6a1016;box-shadow:inset -1px -1px 0 rgba(0,0,0,0.15)'></div>
<div class='t' style='top:582.40px;font-size:12px;color:#000;left:685px;transform:scaleX(0.87);transform-origin:0 0;'>5th</div>
<div class='a' style='left:712px;top:582px;width:13px;height:11px;background:#6a1016;box-shadow:inset -1px -1px 0 rgba(0,0,0,0.15)'></div>
<div class='t' style='top:582.40px;font-size:12px;color:#000;left:727px;transform:scaleX(0.87);transform-origin:0 0;'>7th</div>
<div class='a' style='left:754px;top:582px;width:13px;height:11px;background:#6a1016;box-shadow:inset -1px -1px 0 rgba(0,0,0,0.15)'></div>
<div class='t' style='top:582.40px;font-size:12px;color:#000;left:769px;transform:scaleX(0.87);transform-origin:0 0;'>9th</div>
<div class='t' style='top:607.40px;font-size:12px;color:#000;font-weight:bold;left:628px;'>Modulation Hz</div>
<div class='a' style='left:628px;top:622px;width:120px;height:32px;background:#000;border-top:1px solid #9a9a9a;border-left:1px solid #9a9a9a;border-right:1px solid #fff;border-bottom:1px solid #fff'></div>
<div class='t' style='left:628px;top:626px;width:117.5px;text-align:right;font-size:22px;color:#8a8a8a;-webkit-text-stroke:0.4px #8a8a8a;text-shadow:0 0 1px #8a8a8a'><span style='display:inline-block;width:14.1px;text-align:center'>1</span><span style='display:inline-block;width:14.1px;text-align:center'>0</span><span style='display:inline-block;width:14.1px;text-align:center'>0</span><span style='display:inline-block;width:14.1px;text-align:center'>0</span><span style='display:inline-block;width:14.1px;text-align:center'>.</span><span style='display:inline-block;width:14.1px;text-align:center'>0</span></div>
<div class='a' style='left:750.5px;top:625px;width:26px;height:26px;border-radius:50%;background:radial-gradient(circle at 40% 35%,#dce2d8 0%,#cdd5c7 55%,#bfc8b9 100%);box-shadow:inset -1.5px -1.5px 0 #f4f6f2,1px 1px 0 1px #a2a79e,-0.5px -0.5px 0 0.5px #c8ccc4'></div>
<div class='a' style='left:760.5px;top:640.5px;width:8px;height:8px;border-radius:50%;background:#7b8a73'></div>
<div class='t' style='top:607.40px;font-size:12px;color:#000;font-weight:bold;left:788px;'>Modulation Amp</div>
<div class='a' style='left:788px;top:622px;width:88px;height:32px;background:#000;border-top:1px solid #9a9a9a;border-left:1px solid #9a9a9a;border-right:1px solid #fff;border-bottom:1px solid #fff'></div>
<div class='t' style='left:788px;top:626px;width:85.5px;text-align:right;font-size:22px;color:#8a8a8a;-webkit-text-stroke:0.4px #8a8a8a;text-shadow:0 0 1px #8a8a8a'><span style='display:inline-block;width:14.1px;text-align:center'>1</span><span style='display:inline-block;width:14.1px;text-align:center'>0</span><span style='display:inline-block;width:14.1px;text-align:center'>0</span></div>
<div class='a' style='left:878.5px;top:624px;width:26px;height:26px;border-radius:50%;background:radial-gradient(circle at 40% 35%,#dce2d8 0%,#cdd5c7 55%,#bfc8b9 100%);box-shadow:inset -1.5px -1.5px 0 #f4f6f2,1px 1px 0 1px #a2a79e,-0.5px -0.5px 0 0.5px #c8ccc4'></div>
<div class='a' style='left:888.5px;top:639.5px;width:8px;height:8px;border-radius:50%;background:#7b8a73'></div>
<div class='a' style='left:625px;top:664px;width:17px;height:15px;border-top:1px solid #9a9a9a;border-left:1px solid #9a9a9a;border-right:1px solid #fff;border-bottom:1px solid #fff'></div>
<div class='a' style='left:628px;top:667px;width:13px;height:11px;background:#e0202c;box-shadow:inset -1px -1px 0 rgba(0,0,0,0.15)'></div>
<div class='t' style='top:667.40px;font-size:12px;color:#000;left:643px;transform:scaleX(0.87);transform-origin:0 0;'>CW</div>
<div class='a' style='left:670px;top:667px;width:13px;height:11px;background:#6a1016;box-shadow:inset -1px -1px 0 rgba(0,0,0,0.15)'></div>
<div class='t' style='top:667.40px;font-size:12px;color:#000;left:685px;transform:scaleX(0.87);transform-origin:0 0;'>DC</div>
<div class='a' style='left:712px;top:667px;width:13px;height:11px;background:#6a1016;box-shadow:inset -1px -1px 0 rgba(0,0,0,0.15)'></div>
<div class='t' style='top:667.40px;font-size:12px;color:#000;left:727px;transform:scaleX(0.87);transform-origin:0 0;'>FMW</div>
<div class='a' style='left:754px;top:667px;width:13px;height:11px;background:#6a1016;box-shadow:inset -1px -1px 0 rgba(0,0,0,0.15)'></div>
<div class='t' style='top:667.40px;font-size:12px;color:#000;left:769px;transform:scaleX(0.87);transform-origin:0 0;'>FMN</div>
<div class='a' style='left:796px;top:667px;width:13px;height:11px;background:#6a1016;box-shadow:inset -1px -1px 0 rgba(0,0,0,0.15)'></div>
<div class='t' style='top:667.40px;font-size:12px;color:#000;left:811px;transform:scaleX(0.87);transform-origin:0 0;'>AM</div>
<div class='a' style='left:838px;top:667px;width:13px;height:11px;background:#6a1016;box-shadow:inset -1px -1px 0 rgba(0,0,0,0.15)'></div>
<div class='t' style='top:667.40px;font-size:12px;color:#000;left:853px;transform:scaleX(0.87);transform-origin:0 0;'>EXT</div>
<div class='a' style='left:880px;top:667px;width:13px;height:11px;background:#6a1016;box-shadow:inset -1px -1px 0 rgba(0,0,0,0.15)'></div>
<div class='t' style='top:667.40px;font-size:12px;color:#000;left:895px;transform:scaleX(0.87);transform-origin:0 0;'>ASK</div>
<div class='a' style='left:922px;top:667px;width:13px;height:11px;background:#6a1016;box-shadow:inset -1px -1px 0 rgba(0,0,0,0.15)'></div>
<div class='t' style='top:667.40px;font-size:12px;color:#000;left:937px;transform:scaleX(0.87);transform-origin:0 0;'>FSK</div>
<div class='a' style='left:964px;top:667px;width:13px;height:11px;background:#6a1016;box-shadow:inset -1px -1px 0 rgba(0,0,0,0.15)'></div>
<div class='t' style='top:667.40px;font-size:12px;color:#000;left:979px;transform:scaleX(0.87);transform-origin:0 0;'>NPR</div>
<div class='a' style='left:8px;top:482px;width:598px;height:212px;border-right:1px solid #a0a0a0;border-bottom:1px solid #a0a0a0'></div>
<div class='a' style='left:8px;top:482px;width:1px;height:267px;background:#a0a0a0'></div>
<div class='a' style='left:10px;top:483px;width:592px;height:1px;background:#a0a0a0'></div>
<div class='a' style='left:10px;top:483px;width:1px;height:210px;background:#a0a0a0'></div>
<div class='a' style='left:601px;top:483px;width:1px;height:207px;background:#a0a0a0'></div>
<div class='a' style='left:12px;top:505px;width:589px;height:59px;border-top:1px solid #fff;border-left:1px solid #fff;border-right:1px solid #696969;border-bottom:1px solid #696969;box-shadow:inset -1px -1px 0 #a0a0a0'></div>
<div class='a' style='left:13px;top:486px;width:117px;height:21px;background:#f0f0f0;border-top:1px solid #fff;border-left:1px solid #fff;border-right:1px solid #696969;box-shadow:inset -1px 0 0 #a0a0a0'></div>
<div class='t' style='top:489.90px;font-size:12px;color:#000;left:22.5px;transform:scaleX(0.87);transform-origin:0 0;'>SA Filters/trace types</div>
<div class='a' style='left:130px;top:489px;width:65px;height:16px;border-top:1px solid #fff;border-right:1px solid #696969;box-shadow:inset -1px 0 0 #a0a0a0'></div>
<div class='t' style='top:491.90px;font-size:12px;color:#000;left:136px;transform:scaleX(0.87);transform-origin:0 0;'>SA Triggers</div>
<div class='a' style='left:195px;top:489px;width:71px;height:16px;border-top:1px solid #fff;border-right:1px solid #696969;box-shadow:inset -1px 0 0 #a0a0a0'></div>
<div class='t' style='top:491.90px;font-size:12px;color:#000;left:201px;transform:scaleX(0.87);transform-origin:0 0;'>SA Waterfall</div>
<div class='a' style='left:266px;top:489px;width:62px;height:16px;border-top:1px solid #fff;border-right:1px solid #696969;box-shadow:inset -1px 0 0 #a0a0a0'></div>
<div class='t' style='top:491.90px;font-size:12px;color:#000;left:272px;transform:scaleX(0.87);transform-origin:0 0;'>TSA RBW</div>
<div class='a' style='left:328px;top:489px;width:42px;height:16px;border-top:1px solid #fff;border-right:1px solid #696969;box-shadow:inset -1px 0 0 #a0a0a0'></div>
<div class='t' style='top:491.90px;font-size:12px;color:#000;left:334px;transform:scaleX(0.87);transform-origin:0 0;'>Grid</div>
<div class='a' style='left:20px;top:510px;width:54px;height:13px;background:#c8cbc5'></div>
<div class='t' style='top:510.90px;font-size:12px;color:#000;left:20px;transform:scaleX(0.87);transform-origin:0 0;'>Video Fltr A</div>
<div class='a' style='left:20px;top:522px;width:54px;height:1px;background:#000'></div>
<div class='a' style='left:31.799999999999997px;top:527px;width:26px;height:26px;border-radius:50%;background:radial-gradient(circle at 40% 35%,#dce2d8 0%,#cdd5c7 55%,#bfc8b9 100%);box-shadow:inset -1.5px -1.5px 0 #f4f6f2,1px 1px 0 1px #a2a79e,-0.5px -0.5px 0 0.5px #c8ccc4'></div>
<div class='a' style='left:41.8px;top:542.5px;width:8px;height:8px;border-radius:50%;background:#7b8a73'></div>
<div class='t' style='top:534.90px;font-size:12px;color:#000;left:66.5px;transform:scaleX(0.87);transform-origin:0 0;'>30</div>
<div class='t' style='top:517.20px;font-size:12px;color:#000;left:58.10px;width:120px;text-align:center;transform:scaleX(0.87);transform-origin:50% 0;'>Average</div>
<div class='a' style='left:109.0px;top:533px;width:17.0px;height:16px;background:#6a1016;box-shadow:inset -1px -1px 0 rgba(0,0,0,0.15)'></div>
<div class='t' style='top:517.20px;font-size:12px;color:#000;left:97.90px;width:120px;text-align:center;transform:scaleX(0.87);transform-origin:50% 0;'>LO F</div>
<div class='a' style='left:149.0px;top:533px;width:17.0px;height:16px;background:#6a1016;box-shadow:inset -1px -1px 0 rgba(0,0,0,0.15)'></div>
<div class='t' style='top:517.20px;font-size:12px;color:#000;left:138.00px;width:120px;text-align:center;transform:scaleX(0.87);transform-origin:50% 0;'>E F</div>
<div class='a' style='left:189.0px;top:533px;width:17.0px;height:16px;background:#6a1016;box-shadow:inset -1px -1px 0 rgba(0,0,0,0.15)'></div>
<div class='t' style='top:517.20px;font-size:12px;color:#000;left:175.90px;width:120px;text-align:center;transform:scaleX(0.87);transform-origin:50% 0;'>MinHold</div>
<div class='a' style='left:229.0px;top:533px;width:17.0px;height:16px;background:#6a1016;box-shadow:inset -1px -1px 0 rgba(0,0,0,0.15)'></div>
<div class='t' style='top:517.20px;font-size:12px;color:#000;left:221.50px;width:120px;text-align:center;transform:scaleX(0.87);transform-origin:50% 0;'>MaxHold</div>
<div class='a' style='left:269.0px;top:533px;width:17.0px;height:16px;background:#6a1016;box-shadow:inset -1px -1px 0 rgba(0,0,0,0.15)'></div>
<div class='t' style='top:517.20px;font-size:12px;color:#000;left:258.10px;width:120px;text-align:center;transform:scaleX(0.87);transform-origin:50% 0;'>PM</div>
<div class='a' style='left:309.0px;top:533px;width:17.0px;height:16px;background:#6a1016;box-shadow:inset -1px -1px 0 rgba(0,0,0,0.15)'></div>
<div class='t' style='top:517.20px;font-size:12px;color:#000;left:297.90px;width:120px;text-align:center;transform:scaleX(0.87);transform-origin:50% 0;'>RWindow</div>
<div class='a' style='left:349.0px;top:533px;width:17.0px;height:16px;background:#6a1016;box-shadow:inset -1px -1px 0 rgba(0,0,0,0.15)'></div>
<div class='t' style='top:516.40px;font-size:12px;color:#000;left:396.50px;width:120px;text-align:center;transform:scaleX(0.87);transform-origin:50% 0;'>Fast-Cycle</div>
<div class='a' style='left:448.5px;top:533px;width:17.0px;height:16px;background:#6a1016;box-shadow:inset -1px -1px 0 rgba(0,0,0,0.15)'></div>
<div class='t' style='top:510.90px;font-size:12px;color:#000;left:469.00px;width:120px;text-align:center;transform:scaleX(0.87);transform-origin:50% 0;'>UpdateTime</div>
<div class='a' style='left:515.5px;top:527px;width:26px;height:26px;border-radius:50%;background:radial-gradient(circle at 40% 35%,#dce2d8 0%,#cdd5c7 55%,#bfc8b9 100%);box-shadow:inset -1.5px -1.5px 0 #f4f6f2,1px 1px 0 1px #a2a79e,-0.5px -0.5px 0 0.5px #c8ccc4'></div>
<div class='a' style='left:525.5px;top:542.5px;width:8px;height:8px;border-radius:50%;background:#7b8a73'></div>
<div class='t' style='top:526.90px;font-size:12px;color:#a8385a;left:549px;transform:scaleX(0.87);transform-origin:0 0;'>20ms</div>
<div class='t' style='top:540.40px;font-size:12px;color:#a8385a;left:548px;transform:scaleX(0.87);transform-origin:0 0;'>(2281)</div>
<div class='a' style='left:10px;top:570px;width:592px;height:59px;border-top:1px solid #787878;border-left:1px solid #787878;border-right:1px solid #fff;border-bottom:1px solid #fff;box-shadow:inset 1px 1px 0 #fff,inset 2px 2px 0 #a0a0a0,inset -1px -1px 0 #a0a0a0,inset -2px -2px 0 #fff'></div>
<div class='t' style='top:576.90px;font-size:12px;color:#000;left:24.5px;transform:scaleX(0.87);transform-origin:0 0;'>PeakTH</div>
<div class='a' style='left:29.299999999999997px;top:591.2px;width:26px;height:26px;border-radius:50%;background:radial-gradient(circle at 40% 35%,#dce2d8 0%,#cdd5c7 55%,#bfc8b9 100%);box-shadow:inset -1.5px -1.5px 0 #f4f6f2,1px 1px 0 1px #a2a79e,-0.5px -0.5px 0 0.5px #c8ccc4'></div>
<div class='a' style='left:39.3px;top:606.5px;width:8px;height:8px;border-radius:50%;background:#7b8a73'></div>
<div class='t' style='top:579.20px;font-size:12px;color:#000;left:57.50px;width:120px;text-align:center;transform:scaleX(0.87);transform-origin:50% 0;'>PeakA</div>
<div class='a' style='left:108.5px;top:594px;width:18.0px;height:18px;background:#f0f0f0;border-top:1px solid #fff;border-left:1px solid #fff;border-right:1px solid #696969;border-bottom:1px solid #696969;box-shadow:inset -1px -1px 0 #a0a0a0'></div>
<div class='t' style='top:579.20px;font-size:12px;color:#000;left:97.00px;width:120px;text-align:center;transform:scaleX(0.87);transform-origin:50% 0;'>PeakH</div>
<div class='a' style='left:148px;top:594px;width:18px;height:18px;background:#f0f0f0;border-top:1px solid #fff;border-left:1px solid #fff;border-right:1px solid #696969;border-bottom:1px solid #696969;box-shadow:inset -1px -1px 0 #a0a0a0'></div>
<div class='t' style='top:579.20px;font-size:12px;color:#000;left:137.00px;width:120px;text-align:center;transform:scaleX(0.87);transform-origin:50% 0;'>Tracker</div>
<div class='a' style='left:188px;top:594px;width:18px;height:18px;background:#f0f0f0;border-top:1px solid #fff;border-left:1px solid #fff;border-right:1px solid #696969;border-bottom:1px solid #696969;box-shadow:inset -1px -1px 0 #a0a0a0'></div>
<div class='t' style='top:579.20px;font-size:12px;color:#000;left:177.00px;width:120px;text-align:center;transform:scaleX(0.87);transform-origin:50% 0;'>CF</div>
<div class='a' style='left:228px;top:594px;width:18px;height:18px;background:#f0f0f0;border-top:1px solid #fff;border-left:1px solid #fff;border-right:1px solid #696969;border-bottom:1px solid #696969;box-shadow:inset -1px -1px 0 #a0a0a0'></div>
<div class='t' style='top:579.20px;font-size:12px;color:#000;left:217.00px;width:120px;text-align:center;transform:scaleX(0.87);transform-origin:50% 0;'>Prev</div>
<div class='a' style='left:268px;top:594px;width:18px;height:18px;background:#f0f0f0;border-top:1px solid #fff;border-left:1px solid #fff;border-right:1px solid #696969;border-bottom:1px solid #696969;box-shadow:inset -1px -1px 0 #a0a0a0'></div>
<div class='t' style='top:579.20px;font-size:12px;color:#000;left:257.00px;width:120px;text-align:center;transform:scaleX(0.87);transform-origin:50% 0;'>Next</div>
<div class='a' style='left:308px;top:594px;width:18px;height:18px;background:#f0f0f0;border-top:1px solid #fff;border-left:1px solid #fff;border-right:1px solid #696969;border-bottom:1px solid #696969;box-shadow:inset -1px -1px 0 #a0a0a0'></div>
<div class='t' style='top:579.20px;font-size:12px;color:#000;left:297.00px;width:120px;text-align:center;transform:scaleX(0.87);transform-origin:50% 0;'>Del</div>
<div class='a' style='left:348px;top:594px;width:18px;height:18px;background:#f0f0f0;border-top:1px solid #fff;border-left:1px solid #fff;border-right:1px solid #696969;border-bottom:1px solid #696969;box-shadow:inset -1px -1px 0 #a0a0a0'></div>
<div class='t' style='top:579.20px;font-size:12px;color:#000;left:337.00px;width:120px;text-align:center;transform:scaleX(0.87);transform-origin:50% 0;'>Set</div>
<div class='a' style='left:388px;top:594px;width:18px;height:18px;background:#f0f0f0;border-top:1px solid #fff;border-left:1px solid #fff;border-right:1px solid #696969;border-bottom:1px solid #696969;box-shadow:inset -1px -1px 0 #a0a0a0'></div>
<div class='t' style='top:579.20px;font-size:12px;color:#000;left:382.50px;width:120px;text-align:center;transform:scaleX(0.87);transform-origin:50% 0;'>MKR Unit</div>
<div class='a' style='left:420px;top:594px;width:46px;height:19px;background:#fff;border-top:1px solid #a0a0a0;border-left:1px solid #a0a0a0;border-right:1px solid #fff;border-bottom:1px solid #fff;box-shadow:inset 1px 1px 0 #696969'></div>
<div class='a' style='left:449px;top:596px;width:15px;height:15px;background:#f0f0f0;border-top:1px solid #fff;border-left:1px solid #fff;border-right:1px solid #696969;border-bottom:1px solid #696969'></div>
<svg class='a' style='left:452px;top:601px' width='9' height='5'><path d='M0 0H9L4.5 5Z' fill='#000'/></svg>
<div class='t' style='top:597.90px;font-size:12px;color:#000;left:423px;transform:scaleX(0.87);transform-origin:0 0;'>kHz</div>
<div class='t' style='top:579.20px;font-size:12px;color:#000;left:426.00px;width:120px;text-align:center;transform:scaleX(0.87);transform-origin:50% 0;'>All Info</div>
<div class='a' style='left:477.5px;top:595px;width:17.0px;height:16px;background:#6a1016;box-shadow:inset -1px -1px 0 rgba(0,0,0,0.15)'></div>
<div class='t' style='top:579.20px;font-size:12px;color:#000;left:469.50px;width:120px;text-align:center;transform:scaleX(0.87);transform-origin:50% 0;'>Cursors</div>
<div class='a' style='left:521.0px;top:595px;width:17.0px;height:16px;background:#6a1016;box-shadow:inset -1px -1px 0 rgba(0,0,0,0.15)'></div>
<div class='t' style='top:579.20px;font-size:12px;color:#000;left:508.50px;width:120px;text-align:center;transform:scaleX(0.87);transform-origin:50% 0;'>CP/PSD</div>
<div class='a' style='left:560.0px;top:595px;width:17.0px;height:16px;background:#6a1016;box-shadow:inset -1px -1px 0 rgba(0,0,0,0.15)'></div>
<div class='t' style='top:575.20px;font-size:9.5px;color:#222;left:593px;font-family:'Liberation Serif',serif;'>X</div>
<div class='a' style='left:10px;top:631px;width:592px;height:60px;border-top:1px solid #787878;border-left:1px solid #787878;border-right:1px solid #fff;border-bottom:1px solid #fff;box-shadow:inset 1px 1px 0 #fff,inset 2px 2px 0 #a0a0a0,inset -1px -1px 0 #a0a0a0,inset -2px -2px 0 #fff'></div>
<div class='a' style='left:27px;top:637px;width:37px;height:12px;background:#c8cbc5'></div>
<div class='t' style='top:637.90px;font-size:12px;color:#000;font-weight:bold;left:28px;'>Power</div>
<div class='a' style='left:27px;top:648px;width:37px;height:1px;background:#000'></div>
<div class='a' style='left:29px;top:650px;width:32px;height:30px;border-top:1px solid #a0a0a0;border-left:1px solid #a0a0a0;border-right:1px solid #fff;border-bottom:1px solid #fff'></div>
<div class='a' style='left:33px;top:655px;width:24px;height:23px;background:#1ec81e;box-shadow:inset -1px -1px 0 rgba(0,0,0,0.15)'></div>
<div class='t' style='top:646.70px;font-size:12px;color:#000;left:72.5px;transform:scaleX(0.87);transform-origin:0 0;'>°C</div>
<div class='a' style='left:72px;top:659.5px;width:12px;height:12px;border-radius:50%;background:#f4e41c;border:1px solid #8a8030'></div>
<div class='a' style='left:95px;top:637px;width:38px;height:12px;background:#c8cbc5'></div>
<div class='t' style='top:637.40px;font-size:12px;color:#000;left:96px;transform:scaleX(0.87);transform-origin:0 0;'>Y Zoom</div>
<div class='a' style='left:96px;top:648px;width:37px;height:1px;background:#000'></div>
<div class='a' style='left:102px;top:653px;width:26px;height:26px;border-radius:50%;background:radial-gradient(circle at 40% 35%,#dce2d8 0%,#cdd5c7 55%,#bfc8b9 100%);box-shadow:inset -1.5px -1.5px 0 #f4f6f2,1px 1px 0 1px #a2a79e,-0.5px -0.5px 0 0.5px #c8ccc4'></div>
<div class='a' style='left:112px;top:668.5px;width:8px;height:8px;border-radius:50%;background:#7b8a73'></div>
<div class='t' style='top:641.20px;font-size:12px;color:#000;left:97.50px;width:120px;text-align:center;transform:scaleX(0.87);transform-origin:50% 0;'>ZLock</div>
<div class='a' style='left:149px;top:657px;width:17px;height:16px;background:#6a1016;box-shadow:inset -1px -1px 0 rgba(0,0,0,0.15)'></div>
<div class='t' style='top:641.20px;font-size:12px;color:#000;left:136.50px;width:120px;text-align:center;transform:scaleX(0.87);transform-origin:50% 0;'>ZReset</div>
<div class='a' style='left:188px;top:657px;width:18px;height:18px;background:#f0f0f0;border-top:1px solid #fff;border-left:1px solid #fff;border-right:1px solid #696969;border-bottom:1px solid #696969;box-shadow:inset -1px -1px 0 #a0a0a0'></div>
<div class='t' style='top:641.20px;font-size:12px;color:#000;left:176.50px;width:120px;text-align:center;transform:scaleX(0.87);transform-origin:50% 0;'>Hold</div>
<div class='a' style='left:228.5px;top:657px;width:17.0px;height:16px;background:#6a1016;box-shadow:inset -1px -1px 0 rgba(0,0,0,0.15)'></div>
<div class='a' style='left:257px;top:639px;width:197px;height:43px;border:1px solid #a0a0a0;box-shadow:1px 1px 0 #fff inset,1px 1px 0 #fff'></div>
<div class='a' style='left:422px;top:634px;width:25px;height:9px;background:#f0f0f0'></div>
<div class='t' style='top:635.40px;font-size:12px;color:#000;left:424px;transform:scaleX(0.87);transform-origin:0 0;'>TSA</div>
<div class='t' style='top:641.20px;font-size:12px;color:#000;left:216.50px;width:120px;text-align:center;transform:scaleX(0.87);transform-origin:50% 0;'>Copy</div>
<div class='a' style='left:268px;top:657px;width:18px;height:18px;background:#f0f0f0;border-top:1px solid #fff;border-left:1px solid #fff;border-right:1px solid #696969;border-bottom:1px solid #696969;box-shadow:inset -1px -1px 0 #a0a0a0'></div>
<div class='t' style='top:640.90px;font-size:12px;color:#000;left:257.00px;width:120px;text-align:center;transform:scaleX(0.87);transform-origin:50% 0;'>L/C</div>
<div class='a' style='left:309px;top:657px;width:17px;height:16px;background:#7c7c7c;box-shadow:inset -1px -1px 0 rgba(0,0,0,0.15)'></div>
<div class='t' style='top:641.40px;font-size:12px;color:#000;left:344.5px;transform:scaleX(0.87);transform-origin:0 0;'>Display Format</div>
<div class='a' style='left:346px;top:657px;width:95px;height:19px;background:#fff;border-top:1px solid #a0a0a0;border-left:1px solid #a0a0a0;border-right:1px solid #fff;border-bottom:1px solid #fff;box-shadow:inset 1px 1px 0 #696969'></div>
<div class='a' style='left:424px;top:659px;width:15px;height:15px;background:#f0f0f0;border-top:1px solid #fff;border-left:1px solid #fff;border-right:1px solid #696969;border-bottom:1px solid #696969'></div>
<svg class='a' style='left:427px;top:664px' width='9' height='5'><path d='M0 0H9L4.5 5Z' fill='#000'/></svg>
<div class='t' style='top:660.90px;font-size:12px;color:#000;left:350px;transform:scaleX(0.87);transform-origin:0 0;'>Logmag</div>
<div class='t' style='top:643.20px;font-size:12px;color:#000;left:424.50px;width:120px;text-align:center;transform:scaleX(0.87);transform-origin:50% 0;'>Legend</div>
<div class='a' style='left:476.5px;top:657px;width:18.5px;height:19px;background:#f0f0f0;border-top:1px solid #fff;border-left:1px solid #fff;border-right:1px solid #696969;border-bottom:1px solid #696969;box-shadow:inset -1px -1px 0 #a0a0a0'></div>
<div class='t' style='top:643.20px;font-size:12px;color:#000;left:466.50px;width:120px;text-align:center;transform:scaleX(0.87);transform-origin:50% 0;'>Panels</div>
<div class='a' style='left:519px;top:658px;width:17px;height:17px;background:#f4f4f4;border-top:1px solid #a0a0a0;border-left:1px solid #a0a0a0;border-right:1px solid #fff;border-bottom:1px solid #fff'></div>
<div class='t' style='top:643.20px;font-size:12px;color:#000;left:506.80px;width:120px;text-align:center;transform:scaleX(0.87);transform-origin:50% 0;'>ToolBar</div>
<div class='a' style='left:559px;top:658px;width:17px;height:17px;background:#f4f4f4;border-top:1px solid #a0a0a0;border-left:1px solid #a0a0a0;border-right:1px solid #fff;border-bottom:1px solid #fff'></div>
<div class='a' style='left:593px;top:633px;width:7px;height:55px;background:#b8b8b8'></div>
<div class='t' style='top:656.20px;font-size:11px;color:#000;left:594px;'>&gt;</div>
<div class='a' style='left:8px;top:695px;width:1008px;height:1px;background:#a0a0a0'></div>
<div class='a' style='left:8px;top:696px;width:1008px;height:1px;background:#fff'></div>
<div class='a' style='left:8px;top:748px;width:1008px;height:1px;background:#222'></div>
<div class='a' style='left:8px;top:749px;width:1008px;height:1.5px;background:#a0a0a0'></div>
<div class='a' style='left:0;top:751px;width:1024px;height:5px;background:#000'></div>
<svg class='a' style='left:856px;top:743px' width='20' height='13'><path d='M9.5 1L16 8.5L9.5 16L3 8.5Z' fill='#e8e8e8'/><path d='M1 8.5H18' stroke='#e8e8e8' stroke-width='1.5'/><path d='M9.5 4.5L13 8.5L9.5 12.5L6 8.5Z' fill='#000'/><circle cx='9.5' cy='8.5' r='1.3' fill='#fff'/></svg>
<div class='a' style='left:24px;top:703px;width:59px;height:40px;background:#f0f0f0;border-top:1px solid #fff;border-left:1px solid #fff;border-right:1px solid #696969;border-bottom:1px solid #696969;box-shadow:inset -1px -1px 0 #a0a0a0'></div>
<div class='t' style='top:710.90px;font-size:12px;color:#000;left:-6.50px;width:120px;text-align:center;transform:scaleX(0.87);transform-origin:50% 0;'>Edit SA</div>
<div class='t' style='top:724.20px;font-size:12px;color:#000;left:-6.50px;width:120px;text-align:center;transform:scaleX(0.87);transform-origin:50% 0;'>markers</div>
<div class='a' style='left:90px;top:703px;width:59px;height:40px;background:#f0f0f0;border-top:1px solid #fff;border-left:1px solid #fff;border-right:1px solid #696969;border-bottom:1px solid #696969;box-shadow:inset -1px -1px 0 #a0a0a0'></div>
<div class='t' style='top:710.90px;font-size:12px;color:#000;left:59.50px;width:120px;text-align:center;transform:scaleX(0.87);transform-origin:50% 0;'>Edit TSA</div>
<div class='t' style='top:724.20px;font-size:12px;color:#000;left:59.50px;width:120px;text-align:center;transform:scaleX(0.87);transform-origin:50% 0;'>markers</div>
<div class='a' style='left:156px;top:703px;width:59px;height:40px;background:#f0f0f0;border-top:1px solid #fff;border-left:1px solid #fff;border-right:1px solid #696969;border-bottom:1px solid #696969;box-shadow:inset -1px -1px 0 #a0a0a0'></div>
<div class='t' style='top:710.90px;font-size:12px;color:#000;left:125.50px;width:120px;text-align:center;transform:scaleX(0.87);transform-origin:50% 0;'>TSA/SWE</div>
<div class='t' style='top:724.20px;font-size:12px;color:#000;left:125.50px;width:120px;text-align:center;transform:scaleX(0.87);transform-origin:50% 0;'>1st</div>
<div class='a' style='left:222px;top:703px;width:59px;height:40px;background:#f0f0f0;border-top:1px solid #fff;border-left:1px solid #fff;border-right:1px solid #696969;border-bottom:1px solid #696969;box-shadow:inset -1px -1px 0 #a0a0a0'></div>
<div class='t' style='top:710.90px;font-size:12px;color:#000;left:191.50px;width:120px;text-align:center;transform:scaleX(0.87);transform-origin:50% 0;'>TSA/SWE</div>
<div class='t' style='top:724.20px;font-size:12px;color:#000;left:191.50px;width:120px;text-align:center;transform:scaleX(0.87);transform-origin:50% 0;'>3rd</div>
<div class='a' style='left:288px;top:703px;width:59px;height:40px;background:#f0f0f0;border-top:1px solid #fff;border-left:1px solid #fff;border-right:1px solid #696969;border-bottom:1px solid #696969;box-shadow:inset -1px -1px 0 #a0a0a0'></div>
<div class='t' style='top:710.90px;font-size:12px;color:#000;left:257.50px;width:120px;text-align:center;transform:scaleX(0.87);transform-origin:50% 0;'>TSA/SWE</div>
<div class='t' style='top:724.20px;font-size:12px;color:#000;left:257.50px;width:120px;text-align:center;transform:scaleX(0.87);transform-origin:50% 0;'>5th</div>
<div class='a' style='left:354px;top:703px;width:59px;height:40px;background:#f0f0f0;border-top:1px solid #fff;border-left:1px solid #fff;border-right:1px solid #696969;border-bottom:1px solid #696969;box-shadow:inset -1px -1px 0 #a0a0a0'></div>
<div class='t' style='top:710.90px;font-size:12px;color:#000;left:323.50px;width:120px;text-align:center;transform:scaleX(0.87);transform-origin:50% 0;'>TSA</div>
<div class='t' style='top:724.20px;font-size:12px;color:#000;left:323.50px;width:120px;text-align:center;transform:scaleX(0.87);transform-origin:50% 0;'>RXOffset</div>
<div class='a' style='left:420px;top:703px;width:59px;height:40px;background:#f0f0f0;border-top:1px solid #fff;border-left:1px solid #fff;border-right:1px solid #696969;border-bottom:1px solid #696969;box-shadow:inset -1px -1px 0 #a0a0a0'></div>
<div class='t' style='top:710.90px;font-size:12px;color:#000;left:389.50px;width:120px;text-align:center;transform:scaleX(0.87);transform-origin:50% 0;'>TSA</div>
<div class='t' style='top:724.20px;font-size:12px;color:#000;left:389.50px;width:120px;text-align:center;transform:scaleX(0.87);transform-origin:50% 0;'>TXOffset</div>
<div class='a' style='left:486px;top:703px;width:59px;height:40px;background:#f0f0f0;border-top:1px solid #fff;border-left:1px solid #fff;border-right:1px solid #696969;border-bottom:1px solid #696969;box-shadow:inset -1px -1px 0 #a0a0a0'></div>
<div class='t' style='top:710.90px;font-size:12px;color:#000;left:455.50px;width:120px;text-align:center;transform:scaleX(0.87);transform-origin:50% 0;'>TSA</div>
<div class='t' style='top:724.20px;font-size:12px;color:#000;left:455.50px;width:120px;text-align:center;transform:scaleX(0.87);transform-origin:50% 0;'>Multipl.</div>
<div class='a' style='left:552px;top:703px;width:59px;height:40px;background:#f0f0f0;border-top:1px solid #fff;border-left:1px solid #fff;border-right:1px solid #696969;border-bottom:1px solid #696969;box-shadow:inset -1px -1px 0 #a0a0a0'></div>
<div class='t' style='top:710.90px;font-size:12px;color:#000;left:521.50px;width:120px;text-align:center;transform:scaleX(0.87);transform-origin:50% 0;'>Open</div>
<div class='t' style='top:724.20px;font-size:12px;color:#000;left:521.50px;width:120px;text-align:center;transform:scaleX(0.87);transform-origin:50% 0;'>TSA scan</div>
<div class='a' style='left:618px;top:703px;width:59px;height:40px;background:#f0f0f0;border-top:1px solid #fff;border-left:1px solid #fff;border-right:1px solid #696969;border-bottom:1px solid #696969;box-shadow:inset -1px -1px 0 #a0a0a0'></div>
<div class='t' style='top:710.90px;font-size:12px;color:#000;left:587.50px;width:120px;text-align:center;transform:scaleX(0.87);transform-origin:50% 0;'>Save</div>
<div class='t' style='top:724.20px;font-size:12px;color:#000;left:587.50px;width:120px;text-align:center;transform:scaleX(0.87);transform-origin:50% 0;'>TSA scan</div>
<div class='a' style='left:684px;top:703px;width:59px;height:40px;background:#f0f0f0;border-top:1px solid #fff;border-left:1px solid #fff;border-right:1px solid #696969;border-bottom:1px solid #696969;box-shadow:inset -1px -1px 0 #a0a0a0'></div>
<div class='t' style='top:710.90px;font-size:12px;color:#000;left:653.50px;width:120px;text-align:center;transform:scaleX(0.87);transform-origin:50% 0;'>Save</div>
<div class='t' style='top:724.20px;font-size:12px;color:#000;left:653.50px;width:120px;text-align:center;transform:scaleX(0.87);transform-origin:50% 0;'>JPG/BMP</div>
<div class='a' style='left:750px;top:703px;width:59px;height:40px;background:#f0f0f0;border-top:1px solid #fff;border-left:1px solid #fff;border-right:1px solid #696969;border-bottom:1px solid #696969;box-shadow:inset -1px -1px 0 #a0a0a0'></div>
<div class='t' style='top:717.40px;font-size:12px;color:#000;left:719.50px;width:120px;text-align:center;transform:scaleX(0.87);transform-origin:50% 0;'>Trace Log</div>
<div class='a' style='left:816px;top:703px;width:59px;height:40px;background:#f0f0f0;border-top:1px solid #fff;border-left:1px solid #fff;border-right:1px solid #696969;border-bottom:1px solid #696969;box-shadow:inset -1px -1px 0 #a0a0a0'></div>
<div class='t' style='top:717.40px;font-size:12px;color:#000;left:785.50px;width:120px;text-align:center;transform:scaleX(0.87);transform-origin:50% 0;'>Settings</div>
<div class='a' style='left:881px;top:703px;width:59px;height:40px;background:#f0f0f0;border-top:1px solid #fff;border-left:1px solid #fff;border-right:1px solid #696969;border-bottom:1px solid #696969;box-shadow:inset -1px -1px 0 #a0a0a0'></div>
<div class='t' style='top:717.40px;font-size:12px;color:#000;left:850.50px;width:120px;text-align:center;transform:scaleX(0.87);transform-origin:50% 0;'>About</div>
<div class='a' style='left:947px;top:703px;width:59px;height:40px;background:#f0f0f0;border-top:1px solid #fff;border-left:1px solid #fff;border-right:1px solid #696969;border-bottom:1px solid #696969;box-shadow:inset -1px -1px 0 #a0a0a0'></div>
<div class='t' style='top:717.40px;font-size:12px;color:#000;left:916.50px;width:120px;text-align:center;transform:scaleX(0.87);transform-origin:50% 0;'>Next&gt;&gt;&gt;</div>
</body></html>
